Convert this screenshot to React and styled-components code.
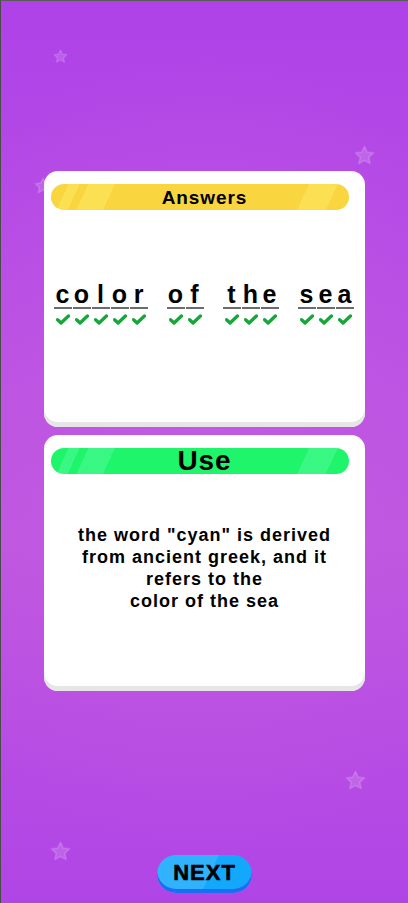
import React from 'react'
import styled, {createGlobalStyle} from 'styled-components'

const GlobalStyle = createGlobalStyle`
    html, body {
        margin: 0;
        padding: 0;
    }
    body {
        font-family: 'Liberation Sans', Arial, sans-serif;
    }
`

const answer = ['color', 'of', 'the', 'sea']

const stars = [
    {x: 52, y: 48, s: 15},
    {x: 353, y: 144, s: 21},
    {x: 33, y: 176, s: 18},
    {x: 344, y: 769, s: 21},
    {x: 49, y: 840, s: 21},
]

function Star({x, y, s}){
    return (
        <StarSvg viewBox="0 0 24 24" style={{left: x, top: y, width: s, height: s}}>
            <path d="M12 1.5l3.1 6.6 7.2.9-5.3 5 1.4 7.1L12 17.6l-6.4 3.5 1.4-7.1-5.3-5 7.2-.9z" strokeLinejoin="round" />
        </StarSvg>
    )
}

function Check(){
    return (
        <CheckSvg viewBox="0 0 16 12">
            <path d="M1.8 6.2l4 3.8 8.4-8" />
        </CheckSvg>
    )
}

export default function App(){
    return (
        <Page>
            <GlobalStyle />
            {stars.map((st, i) => <Star key={i} {...st} />)}
            <Card>
                <Pill $color="#f9d63f" $shine="rgba(255,232,100,0.55)">
                    <PillLabel $size="19px">Answers</PillLabel>
                </Pill>
                <Words>
                    {answer.map(word => (
                        <Word key={word}>
                            {word.split('').map((ch, i) => (
                                <Slot key={i}>
                                    <Letter>{ch}</Letter>
                                    <Check />
                                </Slot>
                            ))}
                        </Word>
                    ))}
                </Words>
            </Card>
            <Card>
                <Pill $color="#1ef56b" $shine="rgba(90,250,160,0.45)">
                    <PillLabel $size="28px">Use</PillLabel>
                </Pill>
                <Clue>
                    the word "cyan" is derived<br />
                    from ancient greek, and it<br />
                    refers to the<br />
                    color of the sea
                </Clue>
            </Card>
            <Footer>
                <NextButton>NEXT</NextButton>
            </Footer>
        </Page>
    )
}

const Page = styled.div`
    position: relative;
    box-sizing: border-box;
    height: 903px;
    overflow: hidden;
    border-top: 1px solid #5a5a5a;
    border-left: 1px solid #4a4a4a;
    background:
        radial-gradient(ellipse 80% 45% at 50% 50%, rgba(200, 95, 225, 0.55), rgba(200, 95, 225, 0) 100%),
        linear-gradient(180deg, #ae42e8 0%, #bb52e3 45%, #bf56e0 60%, #b045e6 100%);
    display: flex;
    flex-direction: column;
    align-items: center;
    padding-top: 170px;
`
const StarSvg = styled.svg`
    position: absolute;
    fill: rgba(255, 255, 255, 0.15);
    stroke: rgba(255, 255, 255, 0.15);
    stroke-width: 2;
`
const Card = styled.div`
    position: relative;
    z-index: 1;
    box-sizing: border-box;
    width: 321px;
    height: 256px;
    margin-bottom: 8px;
    padding: 13px 16px 0 7px;
    background: #fff;
    border-radius: 14px;
    box-shadow: inset 0 -5px 0 #e6e6e6;
`
const Pill = styled.div`
    height: 26px;
    border-radius: 13px;
    display: flex;
    align-items: center;
    justify-content: center;
    padding-left: 9px;
    background:
        linear-gradient(115deg,
            transparent 0 16px, ${p => p.$shine} 16px 26px,
            transparent 26px 34px, ${p => p.$shine} 34px 58px,
            transparent 58px 234px, ${p => p.$shine} 234px 260px,
            transparent 260px),
        ${p => p.$color};
`
const PillLabel = styled.span`
    font-weight: bold;
    font-size: ${p => p.$size};
    letter-spacing: 0.9px;
    color: #000;
    line-height: 1;
`
const Words = styled.div`
    display: flex;
    justify-content: center;
    gap: 19px;
    margin-top: 72px;
    padding-left: 7px;
`
const Word = styled.div`
    display: flex;
    gap: 1px;
`
const Slot = styled.div`
    width: 18px;
    display: flex;
    flex-direction: column;
    align-items: center;
`
const Letter = styled.div`
    width: 100%;
    text-align: center;
    font-weight: bold;
    font-size: 25px;
    line-height: 24px;
    color: #000;
    border-bottom: 2px solid #6b6b6b;
    padding-bottom: 1px;
`
const CheckSvg = styled.svg`
    width: 14px;
    height: 11px;
    margin-top: 5px;
    fill: none;
    stroke: #16a63a;
    stroke-width: 3.8;
    stroke-linecap: round;
    stroke-linejoin: round;
`
const Clue = styled.p`
    margin: 50px 0 0 9px;
    text-align: center;
    font-weight: bold;
    font-size: 18px;
    line-height: 22px;
    letter-spacing: 1px;
    color: #000;
`
const Footer = styled.div`
    margin-top: auto;
    padding-bottom: 10px;
`
const NextButton = styled.button`
    width: 95px;
    height: 38px;
    border: none;
    border-radius: 19px;
    background:
        linear-gradient(115deg, rgba(255,255,255,0.12) 0 55%, transparent 55%),
        #14a8fc;
    box-shadow: inset 0 -4px 0 #1c6cf4;
    font-family: 'Liberation Sans', Arial, sans-serif;
    font-weight: 900;
    font-size: 22px;
    letter-spacing: 1px;
    color: #000;
    padding: 0 0 3px;
    -webkit-text-stroke: 0.6px #000;
`
